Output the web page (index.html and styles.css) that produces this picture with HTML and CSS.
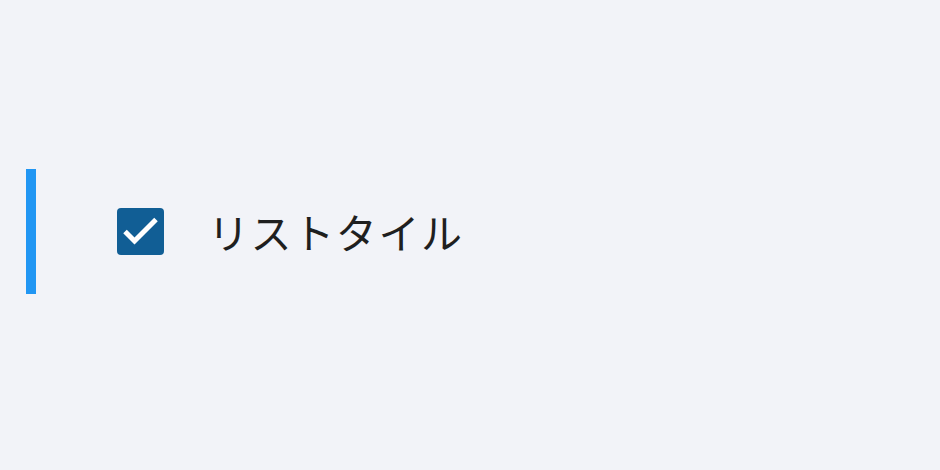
FILE: index.html
```html
<!DOCTYPE html>
<html lang="ja">
<head>
<meta charset="utf-8">
<link rel="stylesheet" href="styles.css">
</head>
<body>
<div class="page">
  <div class="row">
    <span class="check">
      <svg viewBox="0 0 47 47" width="47" height="47"><path d="M8 23.5l9.5 9.5 21.5-21.5" fill="none" stroke="#fff" stroke-width="5"/></svg>
    </span>
    <span class="label">リストタイル</span>
  </div>
</div>
</body>
</html>
```
FILE: styles.css
```css
html, body {
  margin: 0;
  background: #f2f3f8;
}
.page {
  width: 940px;
  height: 470px;
  padding: 169px 0 0 26px;
  box-sizing: border-box;
}
.row {
  height: 125px;
  border-left: 10px solid #2196f3;
  display: flex;
  align-items: center;
  padding-left: 81px;
}
.check {
  width: 47px;
  height: 47px;
  border-radius: 4px;
  background: #115e95;
  display: flex;
}
.label {
  margin-left: 44px;
  font-family: "Noto Sans CJK JP", "Noto Sans", sans-serif;
  font-size: 41px;
  letter-spacing: 1.6px;
  color: #1f1f1f;
  line-height: 1;
}
```
